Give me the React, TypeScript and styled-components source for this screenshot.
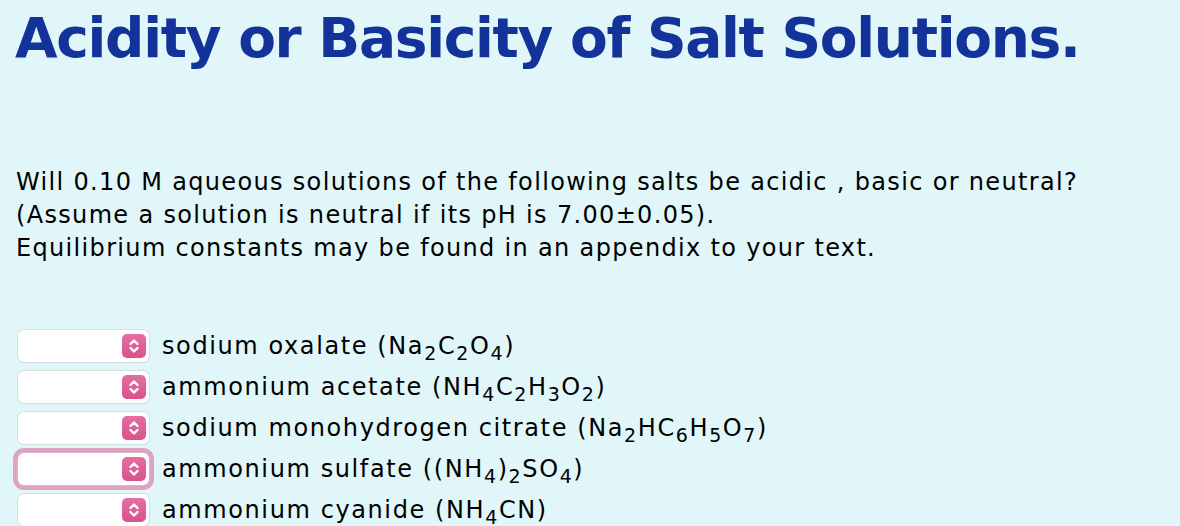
import React from "react";
import styled, { createGlobalStyle } from "styled-components";

const Global = createGlobalStyle`
  html, body { margin: 0; padding: 0; background: #e0f6f8; }
  body { font-family: "DejaVu Sans", Verdana, sans-serif; color: #000; }
`;

const Page = styled.div`
  padding: 8px 0 0 15px;
  width: 1180px;
  height: 526px;
  box-sizing: border-box;
  overflow: hidden;
`;

const Title = styled.h1`
  margin: 0;
  font-family: "DejaVu Sans", Tahoma, sans-serif;
  font-weight: bold;
  font-size: 55px;
  line-height: 60px;
  color: #13329a;
  letter-spacing: -1.3px;
`;

const Intro = styled.p`
  margin: 98px 0 0 1px;
  font-size: 24px;
  line-height: 33px;
  letter-spacing: 1.33px;
`;

const List = styled.div`
  margin-top: 65px;
  display: flex;
  flex-direction: column;
  gap: 9px;
`;

const Row = styled.div`
  display: flex;
  align-items: center;
  gap: 13px;
  height: 32px;
`;

const SelectBox = styled.div<{ $focused?: boolean }>`
  width: 131px;
  height: 32px;
  margin-left: 3px;
  box-sizing: border-box;
  background: #fff;
  border-radius: 6px;
  box-shadow: ${(p) =>
    p.$focused
      ? "0 0 0 1px #d8b6c6, 0 0 0 5px #dea3c1"
      : "0 0 0 1px #d6dfe0, 0 1px 1px rgba(0,0,0,0.12)"};
  display: flex;
  justify-content: flex-end;
  align-items: center;
  padding-right: 3px;
`;

const Stepper = styled.span`
  width: 24px;
  height: 24px;
  border-radius: 5px;
  background: linear-gradient(#e56ea3, #d9528b);
  display: flex;
  align-items: center;
  justify-content: center;
`;

const Label = styled.span`
  font-size: 24px;
  line-height: 32px;
  letter-spacing: 1.6px;
  white-space: nowrap;
`;

const Sub = styled.sub`
  font-size: 19px;
  line-height: 0;
  vertical-align: -6px;
`;

const Arrows = () => (
  <svg width="12" height="16" viewBox="0 0 12 16" fill="none" stroke="#fff" strokeWidth="2.4" strokeLinecap="round" strokeLinejoin="round">
    <path d="M2.5 6 L6 2.5 L9.5 6" />
    <path d="M2.5 10 L6 13.5 L9.5 10" />
  </svg>
);

type Item = { focused?: boolean; label: React.ReactNode };

const items: Item[] = [
  { label: <>sodium oxalate (Na<Sub>2</Sub>C<Sub>2</Sub>O<Sub>4</Sub>)</> },
  { label: <>ammonium acetate (NH<Sub>4</Sub>C<Sub>2</Sub>H<Sub>3</Sub>O<Sub>2</Sub>)</> },
  { label: <>sodium monohydrogen citrate (Na<Sub>2</Sub>HC<Sub>6</Sub>H<Sub>5</Sub>O<Sub>7</Sub>)</> },
  { focused: true, label: <>ammonium sulfate ((NH<Sub>4</Sub>)<Sub>2</Sub>SO<Sub>4</Sub>)</> },
  { label: <>ammonium cyanide (NH<Sub>4</Sub>CN)</> },
];

export default function App() {
  return (
    <>
      <Global />
      <Page>
        <Title>Acidity or Basicity of Salt Solutions.</Title>
        <Intro>
          Will 0.10 M aqueous solutions of the following salts be acidic , basic or neutral?
          <br />
          (Assume a solution is neutral if its pH is 7.00±0.05).
          <br />
          Equilibrium constants may be found in an appendix to your text.
        </Intro>
        <List>
          {items.map((it, i) => (
            <Row key={i}>
              <SelectBox $focused={it.focused}>
                <Stepper>
                  <Arrows />
                </Stepper>
              </SelectBox>
              <Label>{it.label}</Label>
            </Row>
          ))}
        </List>
      </Page>
    </>
  );
}
